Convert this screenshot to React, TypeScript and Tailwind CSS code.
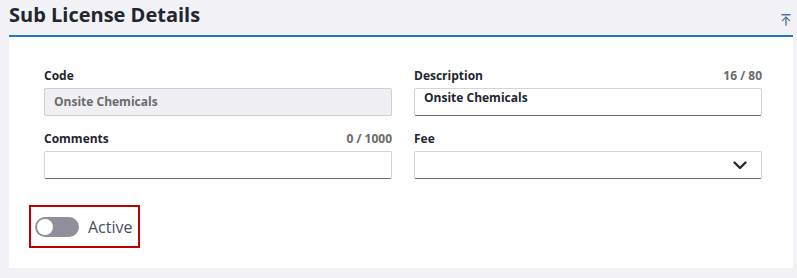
import React, { useState } from "react";
import { ArrowUpToLine } from "lucide-react";

const font = { fontFamily: '"Open Sans", "Noto Sans", sans-serif' };

function FieldLabel({ text, counter }: { text: string; counter?: string }) {
  return (
    <div className="flex items-center justify-between h-[16px] mb-[4px] text-[12px] leading-[16px] font-bold">
      <span className="text-[#222630]">{text}</span>
      {counter && <span className="text-[#6b6b6b]">{counter}</span>}
    </div>
  );
}

export default function App() {
  const [active, setActive] = useState(false);

  return (
    <div className="w-[797px] h-[278px] bg-[#f1f1f6] overflow-hidden" style={font}>
      {/* Header */}
      <div className="flex items-end justify-between h-[35px] pl-[9px] pr-[4px]">
        <h2 className="text-[20px] leading-[28px] font-bold text-[#23262d] pb-[6px]">Sub License Details</h2>
        <button className="mb-[8px] text-[#4f6f96]">
          <ArrowUpToLine className="w-[14px] h-[14px]" strokeWidth={2.2} />
        </button>
      </div>

      {/* Panel */}
      <div className="ml-[9px] mr-[4px] border-t-2 border-[#1f77bf] bg-white pl-[20px] pr-[31px] pt-[31px] pb-[20px]">
        <div className="grid grid-cols-2 gap-x-[22px] gap-y-[15px] pl-[15px]">
          <div>
            <FieldLabel text="Code" />
            <div className="h-[28px] flex items-center px-[9px] bg-[#f0f0f4] border border-[#cfcfd4] rounded-[2px] text-[12px] font-bold text-[#6b6b6b]">
              Onsite Chemicals
            </div>
          </div>
          <div>
            <FieldLabel text="Description" counter="16 / 80" />
            <div className="h-[28px] px-[9px] pt-[1px] bg-white border border-[#d4d4d8] border-b-[#6e6e6e] rounded-[2px] text-[12px] leading-[16px] font-bold text-[#23262d]">
              Onsite Chemicals
            </div>
          </div>
          <div>
            <FieldLabel text="Comments" counter="0 / 1000" />
            <div className="h-[28px] bg-white border border-[#d4d4d8] border-b-[#6e6e6e] rounded-[2px]" />
          </div>
          <div>
            <FieldLabel text="Fee" />
            <div className="h-[28px] flex items-center justify-end pr-[14px] bg-white border border-[#d4d4d8] border-b-[#6e6e6e] rounded-[2px]">
              <svg width="14" height="9" viewBox="0 0 14 9" fill="none">
                <path d="M1.5 1.5 L7 7 L12.5 1.5" stroke="#222630" strokeWidth="2.3" strokeLinecap="round" strokeLinejoin="round" />
              </svg>
            </div>
          </div>
        </div>

        <div className="mt-[26px] inline-flex items-center gap-[9px] border-2 border-[#bf0000] pl-[4px] pr-[5px] h-[43px]">
          <button
            onClick={() => setActive(!active)}
            className={`relative w-[44px] h-[20px] rounded-full ${active ? "bg-[#1f77bf]" : "bg-[#8f909c]"}`}
          >
            <span
              className={`absolute top-[2px] w-[16px] h-[16px] rounded-full bg-white ${active ? "left-[26px]" : "left-[2px]"}`}
            />
          </button>
          <span className="text-[16px] leading-[22px] text-[#4a4f5c]">Active</span>
        </div>
      </div>
    </div>
  );
}
